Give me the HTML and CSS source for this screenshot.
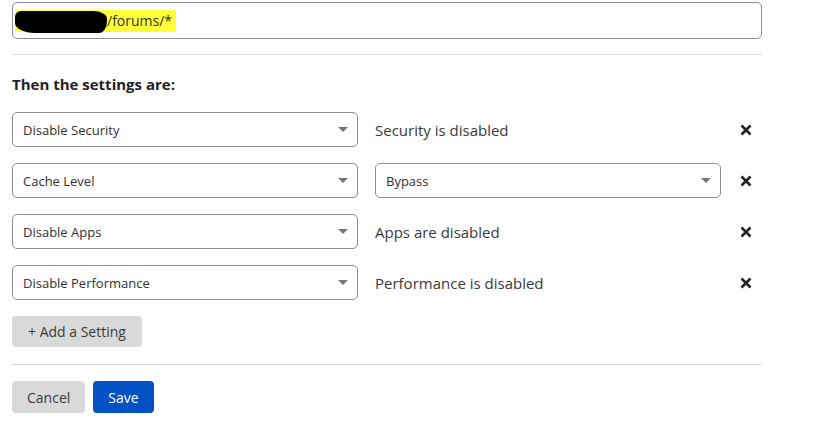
FILE: index.html
```html
<!DOCTYPE html>
<html lang="en">
<head>
    <meta charset="UTF-8">
    <meta name="viewport" content="width=device-width, initial-scale=1.0">
    <title>Page Rule</title>
    <link rel="stylesheet" href="styles.css">
</head>
<body>

<div class="container">
    <div class="url-input">
        <span class="highlight"><span class="redacted"></span>/forums/*</span>
    </div>

    <hr class="divider">

    <h2>Then the settings are:</h2>

    <div class="settings">
        <div class="select">Disable Security<span class="arrow"></span></div>
        <div class="value">Security is disabled</div>
        <button class="remove"><svg width="12" height="12" viewBox="0 0 12 12"><path d="M1.5 1.5L10.5 10.5M10.5 1.5L1.5 10.5"/></svg></button>

        <div class="select">Cache Level<span class="arrow"></span></div>
        <div class="select">Bypass<span class="arrow"></span></div>
        <button class="remove"><svg width="12" height="12" viewBox="0 0 12 12"><path d="M1.5 1.5L10.5 10.5M10.5 1.5L1.5 10.5"/></svg></button>

        <div class="select">Disable Apps<span class="arrow"></span></div>
        <div class="value">Apps are disabled</div>
        <button class="remove"><svg width="12" height="12" viewBox="0 0 12 12"><path d="M1.5 1.5L10.5 10.5M10.5 1.5L1.5 10.5"/></svg></button>

        <div class="select">Disable Performance<span class="arrow"></span></div>
        <div class="value">Performance is disabled</div>
        <button class="remove"><svg width="12" height="12" viewBox="0 0 12 12"><path d="M1.5 1.5L10.5 10.5M10.5 1.5L1.5 10.5"/></svg></button>
    </div>

    <button class="btn btn-grey add">+ Add a Setting</button>

    <hr class="divider bottom">

    <div class="actions">
        <button class="btn btn-grey">Cancel</button>
        <button class="btn btn-blue">Save</button>
    </div>
</div>

</body>
</html>
```

FILE: styles.css
```css
body {
    margin: 0;
    font-family: "Open Sans", "Noto Sans", sans-serif;
    color: #313131;
    background: #fff;
}
.container {
    width: 750px;
    padding: 2px 0 0 12px;
}
.url-input {
    height: 35px;
    border: 1px solid #8d8d8d;
    border-radius: 5px;
    display: flex;
    align-items: center;
    padding-left: 2px;
}
.highlight {
    background: #ffff3a;
    font-size: 14px;
    color: #333;
    display: flex;
    align-items: center;
    height: 22px;
    padding-right: 4px;
}
.redacted {
    display: inline-block;
    width: 92px;
    height: 22px;
    background: #000;
    border-radius: 6px 14px 8px 20px / 6px 8px 12px 10px;
    margin-top: 2px;
}
.divider {
    border: 0;
    border-top: 1px solid #d9d9d9;
    margin: 15px 0 0;
}
h2 {
    font-size: 15px;
    font-weight: 700;
    color: #1f2124;
    margin: 19px 0 18px;
    line-height: 20px;
}
.settings {
    display: grid;
    grid-template-columns: 346px 346px 1fr;
    column-gap: 17px;
    row-gap: 16px;
    align-items: center;
}
.select {
    height: 33px;
    border: 1px solid #8d8d8d;
    border-radius: 5px;
    display: flex;
    align-items: center;
    padding: 0 10px;
    font-size: 13px;
}
.arrow {
    margin-left: auto;
    width: 0;
    height: 0;
    border-left: 5px solid transparent;
    border-right: 5px solid transparent;
    border-top: 5px solid #777;
    margin-right: -1px;
}
.value {
    font-size: 15px;
    color: #3a3a3a;
}
.remove {
    justify-self: end;
    margin-right: 10px;
    border: 0;
    background: none;
    padding: 0;
    display: flex;
}
.remove path {
    stroke: #222;
    stroke-width: 2.6;
    fill: none;
}
.btn {
    border: 0;
    border-radius: 4px;
    font-family: inherit;
    font-size: 14px;
    height: 32px;
    padding: 0 15px;
}
.btn-grey {
    background: #d9d9d9;
    color: #3a3a3a;
}
.btn-blue {
    background: #0051c3;
    color: #fff;
}
.add {
    margin-top: 16px;
    padding: 0 16px;
    height: 31px;
}
.bottom {
    margin-top: 17px;
}
.actions {
    display: flex;
    gap: 8px;
    margin-top: 16px;
}
```
